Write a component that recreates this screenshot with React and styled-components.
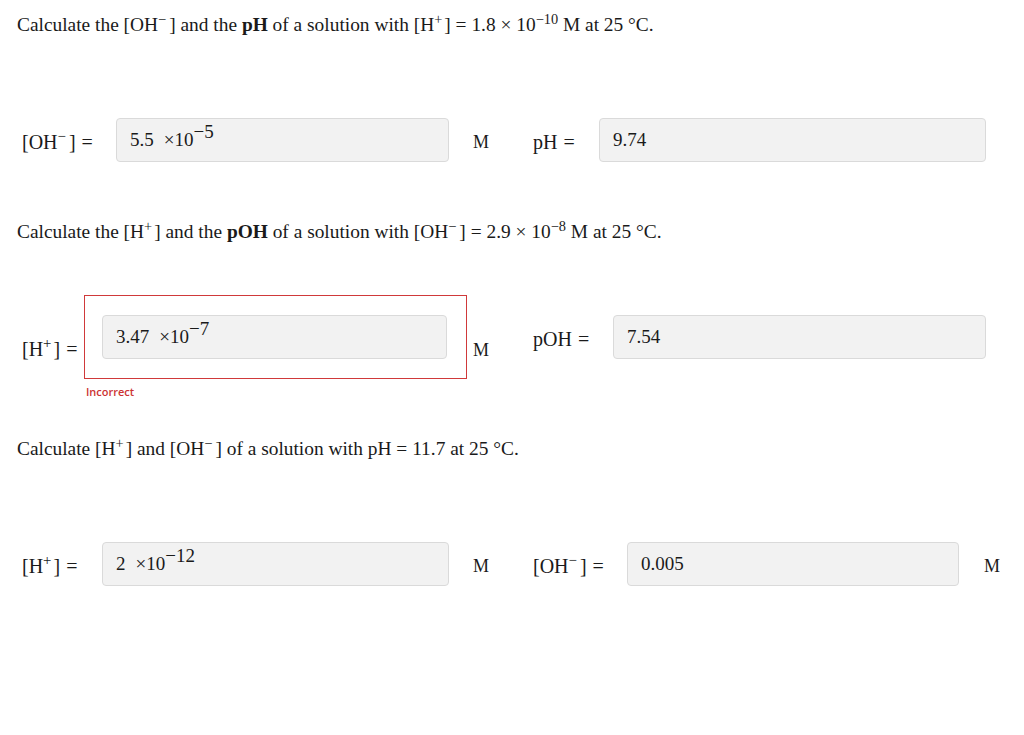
import React from 'react';
import styled, { createGlobalStyle } from 'styled-components';

const GlobalStyle = createGlobalStyle`
  body {
    margin: 0;
    background: #fff;
    color: #1a1a1a;
    font-family: "Liberation Serif", "Times New Roman", serif;
  }
`;

const Page = styled.div`
  padding: 13px 14px 0 17px;
`;

const Prompt = styled.p`
  margin: ${props => props.top || 0}px 0 0;
  font-size: 19.4px;
  line-height: 24px;
  white-space: nowrap;
`;

const Sup = styled.sup`
  font-size: 0.74em;
  line-height: 0;
  vertical-align: 0.5em;
  margin-right: ${props => props.gap || 0}px;
`;

const Eq = styled.span`
  margin-left: 0.3em;
`;

const Row = styled.div`
  display: flex;
  align-items: center;
  margin-top: ${props => props.top || 0}px;
  padding-left: 5px;
`;

const Label = styled.div`
  flex: none;
  width: ${props => props.w}px;
  padding-top: ${props => (props.shift || 0) * 2}px;
  font-size: 20px;
  white-space: nowrap;
`;

const Field = styled.div`
  flex: none;
  box-sizing: border-box;
  width: ${props => props.w}px;
  height: 44px;
  display: flex;
  align-items: center;
  padding-left: 13px;
  background: #f2f2f2;
  border: 1px solid #dadada;
  border-radius: 4px;
  font-family: "Liberation Serif", "Times New Roman", serif;
  font-size: 19px;
  white-space: nowrap;
`;

const Exp = styled.span`
  margin-left: 10px;
`;

const ExpSup = styled.span`
  position: relative;
  top: -8px;
  font-size: 19px;
`;

const Unit = styled.div`
  flex: none;
  box-sizing: border-box;
  width: ${props => props.w}px;
  padding-left: ${props => props.pad}px;
  padding-top: ${props => (props.shift || 0) * 2}px;
  font-size: 18px;
`;

const FeedbackBox = styled.div`
  flex: none;
  border: 1px solid #d0393a;
  padding: 19px 19px 19px 17px;
`;

const Incorrect = styled.div`
  margin: 5px 0 0 69px;
  font-family: "Open Sans", "Liberation Sans", sans-serif;
  font-size: 11px;
  font-weight: 600;
  line-height: 15px;
  color: #cc3333;
`;

const Sci = ({ base, power }) => (
  <>
    {base}
    <Exp>×10</Exp>
    <ExpSup>−{power}</ExpSup>
  </>
);

const OH = () => <>[OH<Sup gap={3}>−</Sup>]</>;
const H = () => <>[H<Sup gap={2}>+</Sup>]</>;

export default function App() {
  return (
    <Page>
      <GlobalStyle />
      <Prompt>
        Calculate the <OH /> and the <b>pH</b> of a solution with <H /> = 1.8 × 10<Sup>−10</Sup> M at 25 °C.
      </Prompt>
      <Row top={81}>
        <Label w={94} shift={2}><OH /><Eq>=</Eq></Label>
        <Field w={333}><Sci base="5.5" power="5" /></Field>
        <Unit w={84} pad={24} shift={2}>M</Unit>
        <Label w={66} shift={2}>pH<Eq>=</Eq></Label>
        <Field w={387}>9.74</Field>
      </Row>

      <Prompt top={58}>
        Calculate the <H /> and the <b>pOH</b> of a solution with <OH /> = 2.9 × 10<Sup>−8</Sup> M at 25 °C.
      </Prompt>
      <Row top={51}>
        <Label w={62} shift={12}><H /><Eq>=</Eq></Label>
        <FeedbackBox>
          <Field w={345}><Sci base="3.47" power="7" /></Field>
        </FeedbackBox>
        <Unit w={66} pad={6} shift={13}>M</Unit>
        <Label w={80} shift={2}>pOH<Eq>=</Eq></Label>
        <Field w={373}>7.54</Field>
      </Row>
      <Incorrect>Incorrect</Incorrect>

      <Prompt top={38}>
        Calculate <H /> and <OH /> of a solution with pH = 11.7 at 25 °C.
      </Prompt>
      <Row top={81}>
        <Label w={80} shift={2}><H /><Eq>=</Eq></Label>
        <Field w={347}><Sci base="2" power="12" /></Field>
        <Unit w={84} pad={24} shift={2}>M</Unit>
        <Label w={94} shift={2}><OH /><Eq>=</Eq></Label>
        <Field w={332}>0.005</Field>
        <Unit w={50} pad={25} shift={2}>M</Unit>
      </Row>
    </Page>
  );
}
